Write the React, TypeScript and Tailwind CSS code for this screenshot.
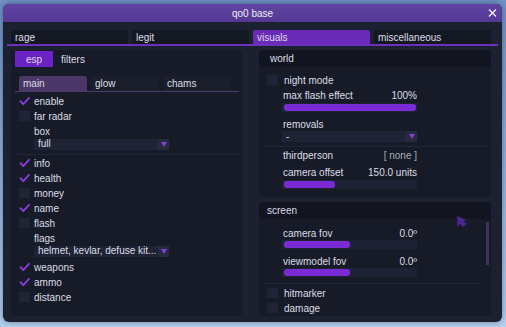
import React from "react";

const Check = ({ on }: { on: boolean }) => (
  <div className={`w-[11px] h-[10px] flex items-center justify-center ${on ? "" : "bg-[#1f2536]"}`}>
    {on && (
      <svg width="11" height="10" viewBox="0 0 11 10">
        <path d="M1.5 5.2 L4.2 8.2 L10 1.8" stroke="#8b3be0" strokeWidth="1.8" fill="none" strokeLinecap="round" strokeLinejoin="round" />
      </svg>
    )}
  </div>
);

const CheckRow = ({ label, on }: { label: string; on: boolean }) => (
  <div className="h-[15px] flex items-center pl-[8px]">
    <Check on={on} />
    <span className="ml-[4px]">{label}</span>
  </div>
);

const Dropdown = ({ value, w }: { value: string; w: string }) => (
  <div className={`h-[11px] ${w} bg-[#1e2435] flex items-center justify-between`}>
    <span className="pl-[4px] leading-none">{value}</span>
    <div className="w-[11px] h-[11px] bg-[#262c3e] flex items-center justify-center">
      <svg width="6" height="5" viewBox="0 0 6 5">
        <path d="M0 0 L6 0 L3 5 Z" fill="#8a3ad8" />
      </svg>
    </div>
  </div>
);

const Slider = ({ pct }: { pct: number }) => (
  <div className="w-[135px] h-[9px] bg-[#1d2334] p-[1px] pl-[2px]">
    <div className="h-[7px] rounded-[3px] bg-[#7b2bd4]" style={{ width: `${pct}%` }} />
  </div>
);

export default function App() {
  return (
    <div className="w-[506px] h-[327px] overflow-hidden relative bg-gradient-to-b from-[#6f93c6] via-[#8fb3e2] to-[#b4d0f0] pt-[4px] pl-[3px] font-['Liberation_Sans',sans-serif] text-[10px] text-[#dcdde6]">
      <div className="w-[499px] h-[318px] rounded-[6px] bg-[#1c2132] flex flex-col overflow-hidden shadow-[0_0_6px_rgba(0,0,0,0.4)]">
        {/* title bar */}
        <div className="h-[18px] bg-gradient-to-b from-[#6144a3] to-[#533893] relative flex items-center justify-center shrink-0">
          <span className="text-[10px] text-[#ececf4]">qo0 base</span>
          <svg className="absolute right-[5px] top-[5px]" width="9" height="8" viewBox="0 0 9 8">
            <path d="M1 0.5 L8 7.5 M8 0.5 L1 7.5" stroke="#f2f2f8" strokeWidth="1.3" />
          </svg>
        </div>
        {/* tabs */}
        <div className="flex gap-[4px] pl-[8px] mt-[8px] h-[14px]">
          {["rage", "legit", "visuals", "miscellaneous"].map((t) => (
            <div
              key={t}
              className={`w-[117px] h-[14px] rounded-t-[3px] flex items-center pl-[4px] ${t === "visuals" ? "bg-[#6a2bb8]" : "bg-[#141823]"}`}
            >
              {t}
            </div>
          ))}
        </div>
        <div className="mx-[4px] h-[2px] bg-[#6d30bb]" />
        {/* panels */}
        <div className="flex mt-[4px] pl-[8px] gap-[17px]">
          {/* left panel */}
          <div className="w-[231px] h-[266px] rounded-[4px] bg-[#171b28] flex flex-col">
            <div className="flex items-center pt-[1px] pl-[4px]">
              <div className="w-[38px] h-[16px] bg-[#6b22c4] flex items-center justify-center">esp</div>
              <span className="ml-[8px]">filters</span>
            </div>
            <div className="flex gap-[4px] pl-[8px] mt-[9px]">
              {["main", "glow", "chams"].map((t) => (
                <div
                  key={t}
                  className={`w-[68px] h-[15px] rounded-t-[3px] flex items-center pl-[4px] ${t === "main" ? "bg-[#4a3767]" : "bg-[#1b1f2c]"}`}
                >
                  {t}
                </div>
              ))}
            </div>
            <div className="ml-[4px] mr-[3px] h-[1px] bg-[#4c3a6c]" />
            <div className="mt-[1.5px]">
              <CheckRow label="enable" on />
              <CheckRow label="far radar" on={false} />
              <div className="h-[15px] flex items-center pl-[23px]">box</div>
              <div className="pl-[23px]">
                <Dropdown value="full" w="w-[135px]" />
              </div>
              <div className="mt-[4px] ml-[5px] mr-[3px] h-[1px] bg-[#20263a]" />
              <div className="mt-[1px]">
                <CheckRow label="info" on />
                <CheckRow label="health" on />
                <CheckRow label="money" on={false} />
                <CheckRow label="name" on />
                <CheckRow label="flash" on={false} />
                <div className="h-[15px] flex items-center pl-[23px]">flags</div>
                <div className="pl-[23px]">
                  <Dropdown value="helmet, kevlar, defuse kit..." w="w-[135px]" />
                </div>
                <div className="mt-[3px]">
                  <CheckRow label="weapons" on />
                  <CheckRow label="ammo" on />
                  <CheckRow label="distance" on={false} />
                </div>
              </div>
            </div>
          </div>
          {/* right column */}
          <div className="w-[232px] flex flex-col gap-[5px]">
            {/* world */}
            <div className="h-[147px] rounded-[4px] bg-[#171b28] flex flex-col">
              <div className="h-[17px] rounded-t-[4px] bg-[#12151f] flex items-center pl-[11px]">world</div>
              <div className="mt-[5.5px] h-[15px] flex items-center pl-[8px]">
                <Check on={false} />
                <span className="ml-[6px]">night mode</span>
              </div>
              <div className="pl-[24px] w-[158px] h-[15px] flex items-center justify-between">
                <span>max flash effect</span>
                <span>100%</span>
              </div>
              <div className="pl-[23px] mt-[0.5px]">
                <Slider pct={100} />
              </div>
              <div className="pl-[24px] mt-[5px] h-[14px] flex items-center">removals</div>
              <div className="pl-[23px]">
                <Dropdown value="-" w="w-[135px]" />
              </div>
              <div className="mt-[4px] mx-[4px] h-[1px] bg-[#20263a]" />
              <div className="pl-[24px] w-[158px] mt-[1px] h-[15px] flex items-center justify-between">
                <span>thirdperson</span>
                <span className="text-[#a9abb8]">[ none ]</span>
              </div>
              <div className="pl-[24px] w-[158px] mt-[2px] h-[15px] flex items-center justify-between">
                <span>camera offset</span>
                <span>150.0 units</span>
              </div>
              <div className="pl-[23px]">
                <Slider pct={39} />
              </div>
            </div>
            {/* screen */}
            <div className="h-[114px] rounded-[4px] bg-[#171b28] flex flex-col relative">
              <div className="h-[17px] rounded-t-[4px] bg-[#12151f] flex items-center pl-[8px]">screen</div>
              <div className="absolute left-[227px] top-[20px] w-[3px] h-[43px] bg-[#3e3359]" />
              <div className="pl-[24px] w-[158px] mt-[7px] h-[14px] flex items-center justify-between">
                <span>camera fov</span>
                <span>0.0º</span>
              </div>
              <div className="pl-[23px]">
                <Slider pct={50} />
              </div>
              <div className="pl-[24px] w-[158px] mt-[5px] h-[14px] flex items-center justify-between">
                <span>viewmodel fov</span>
                <span>0.0º</span>
              </div>
              <div className="pl-[23px]">
                <Slider pct={50} />
              </div>
              <div className="mt-[6px] ml-[4px] mr-[10px] h-[1px] bg-[#20263a]" />
              <div className="mt-[1.5px]">
                <div className="h-[15px] flex items-center pl-[8px]">
                  <Check on={false} />
                  <span className="ml-[6px]">hitmarker</span>
                </div>
                <div className="h-[15px] flex items-center pl-[8px]">
                  <Check on={false} />
                  <span className="ml-[6px]">damage</span>
                </div>
              </div>
            </div>
          </div>
        </div>
      </div>
      {/* cursor */}
      <svg className="absolute left-[456px] top-[215px]" width="12" height="14" viewBox="0 0 12 14">
        <path d="M1 1 L1 12 L4 9 L7 12.5 L11 8.5 L7.5 6.5 L11 5 Z" fill="#4a2a8a" stroke="#2a1a50" strokeWidth="0.8" strokeLinejoin="round" />
      </svg>
    </div>
  );
}
